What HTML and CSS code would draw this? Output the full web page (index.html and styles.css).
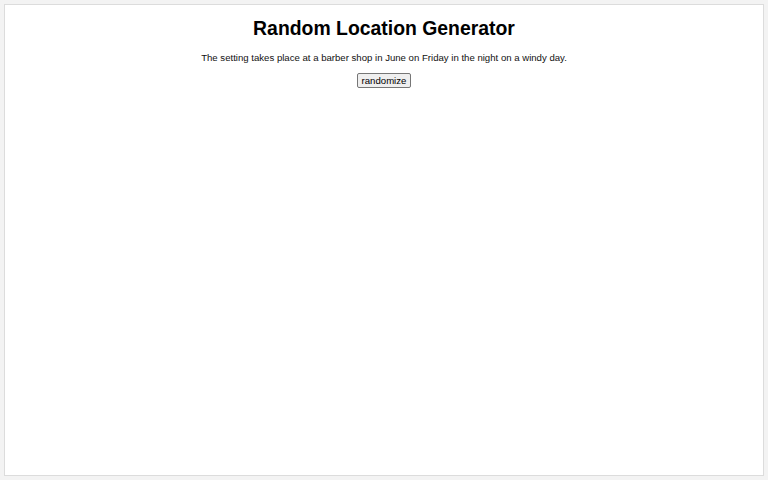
FILE: index.html
```html
<!DOCTYPE html>
<html lang="en">
<head>
    <meta charset="UTF-8">
    <meta name="viewport" content="width=device-width, initial-scale=1.0">
    <title>Random Location Generator</title>
    <link rel="stylesheet" href="styles.css">
</head>
<body>
    <div class="frame">
        <h1>Random Location Generator</h1>
        <p class="setting" id="setting">The setting takes place at a barber shop in June on Friday in the night on a windy day.</p>
        <button class="randomize" onclick="randomize()">randomize</button>
    </div>

    <script>
        const places = ['a barber shop', 'a bakery', 'a library', 'a train station', 'a beach', 'a hospital'];
        const months = ['January', 'February', 'March', 'April', 'May', 'June', 'July', 'August', 'September', 'October', 'November', 'December'];
        const days = ['Monday', 'Tuesday', 'Wednesday', 'Thursday', 'Friday', 'Saturday', 'Sunday'];
        const times = ['the morning', 'the afternoon', 'the evening', 'the night'];
        const weather = ['a windy day', 'a rainy day', 'a sunny day', 'a snowy day'];

        function pick(list) {
            return list[Math.floor(Math.random() * list.length)];
        }

        function randomize() {
            document.getElementById('setting').innerText =
                `The setting takes place at ${pick(places)} in ${pick(months)} on ${pick(days)} in ${pick(times)} on ${pick(weather)}.`;
        }
    </script>
</body>
</html>
```

FILE: styles.css
```css
html, body { height: 100%; }
body { margin: 0; padding: 4px; box-sizing: border-box; background: #f3f3f3; font-family: "Liberation Sans", Arial, sans-serif; }
.frame { height: 100%; box-sizing: border-box; background: #fff; border: 1px solid #dcdcdc; text-align: center; padding-top: 12px; }
h1 { margin: 0; font-size: 19.4px; line-height: 23px; }
.setting { margin: 12px 0 0; font-size: 9.6px; line-height: 12px; color: #111; }
.randomize { margin-top: 9px; font-family: inherit; font-size: 9.6px; padding: 1px 4px; background: #efefef; border: 1px solid #767676; border-radius: 2px; }
```
